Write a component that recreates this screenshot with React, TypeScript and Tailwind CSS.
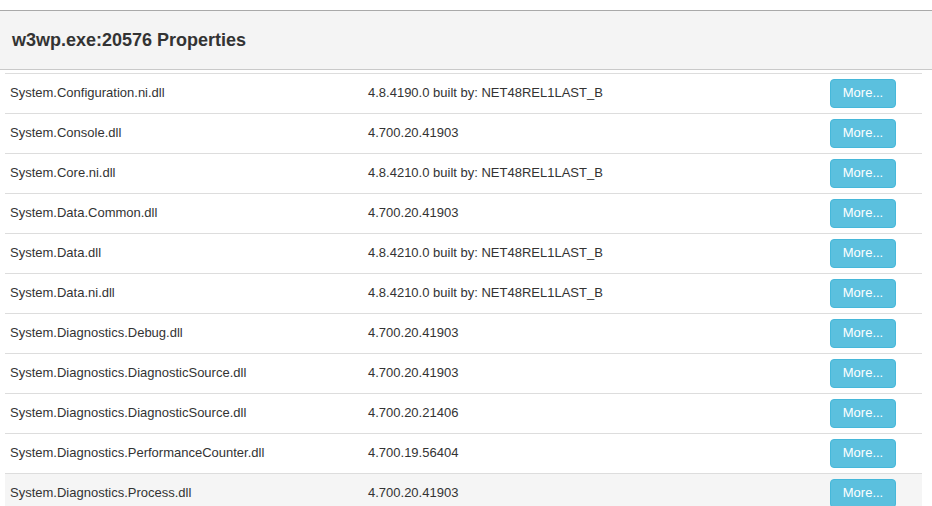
const rows: [string, string][] = [
  ["System.Configuration.ni.dll", "4.8.4190.0 built by: NET48REL1LAST_B"],
  ["System.Console.dll", "4.700.20.41903"],
  ["System.Core.ni.dll", "4.8.4210.0 built by: NET48REL1LAST_B"],
  ["System.Data.Common.dll", "4.700.20.41903"],
  ["System.Data.dll", "4.8.4210.0 built by: NET48REL1LAST_B"],
  ["System.Data.ni.dll", "4.8.4210.0 built by: NET48REL1LAST_B"],
  ["System.Diagnostics.Debug.dll", "4.700.20.41903"],
  ["System.Diagnostics.DiagnosticSource.dll", "4.700.20.41903"],
  ["System.Diagnostics.DiagnosticSource.dll", "4.700.20.21406"],
  ["System.Diagnostics.PerformanceCounter.dll", "4.700.19.56404"],
  ["System.Diagnostics.Process.dll", "4.700.20.41903"],
];

export default function App() {
  return (
    <div
      className="h-[506px] w-[932px] overflow-hidden bg-white pt-[10px] text-[#333]"
      style={{ fontFamily: '"Liberation Sans", Arial, sans-serif' }}
    >
      <div className="flex h-[60px] items-center border-y border-t-[#a9a9a9] border-b-[#c9c9c9] bg-[#f4f4f4] px-3">
        <h4 className="text-[18px] font-bold leading-none">w3wp.exe:20576 Properties</h4>
      </div>
      <div className="ml-[5px] mt-[3px] w-[917px] border-t border-[#ddd]">
        {rows.map(([name, version], i) => (
          <div
            key={i}
            className={`flex h-[40px] items-center border-b border-[#ddd] text-[13px] ${
              i === rows.length - 1 ? "bg-[#f5f5f5]" : ""
            }`}
          >
            <div className="w-[363px] pb-[2px] pl-[5px]">{name}</div>
            <div className="w-[462px] pb-[2px]">{version}</div>
            <div className="flex-1">
              <button className="h-[29px] w-[66px] rounded-[4px] border border-[#46b8da] bg-[#5bc0de] pb-[1px] text-[13px] text-white">
                More...
              </button>
            </div>
          </div>
        ))}
      </div>
    </div>
  );
}
